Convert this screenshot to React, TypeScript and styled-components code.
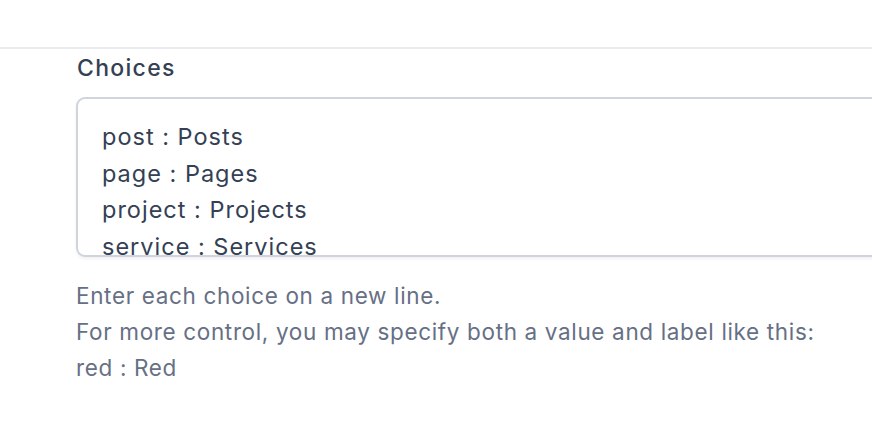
import styled, { createGlobalStyle } from "styled-components";

const GlobalStyle = createGlobalStyle`
  html, body {
    margin: 0;
    padding: 0;
    background: #ffffff;
    font-family: Inter, "Noto Sans", sans-serif;
  }
`;

const Page = styled.div`
  width: 872px;
  height: 424px;
  overflow: hidden;
  padding-top: 47px;
  box-sizing: border-box;
`;

const Divider = styled.div`
  height: 2px;
  background: #eaebef;
`;

const Field = styled.div`
  padding: 3px 0 0 76px;
`;

const Label = styled.label`
  display: block;
  padding-left: 1px;
  font-size: 23px;
  font-weight: 500;
  letter-spacing: 1.3px;
  line-height: 32px;
  color: #344054;
  margin-bottom: 13px;
`;

const TextArea = styled.textarea`
  display: block;
  box-sizing: border-box;
  width: 860px;
  height: 160px;
  margin: 0;
  padding: 20px 24px;
  border: 2px solid #d0d5dd;
  border-radius: 9px;
  box-shadow: 0 2px 3px rgba(16, 24, 40, 0.06);
  font-family: Inter, "Noto Sans", sans-serif;
  font-size: 23.5px;
  letter-spacing: 1px;
  line-height: 36.5px;
  color: #344054;
  background: #ffffff;
  resize: none;
  overflow: hidden;
  outline: none;
`;

const Help = styled.p`
  margin: 21px 0 0;
  font-size: 22.5px;
  letter-spacing: 0.65px;
  line-height: 36px;
  color: #667085;
`;

const choices = [
  "post : Posts",
  "page : Pages",
  "project : Projects",
  "service : Services",
  "product : Products",
].join("\n");

export default function App() {
  return (
    <>
      <GlobalStyle />
      <Page>
        <Divider />
        <Field>
          <Label>Choices</Label>
          <TextArea defaultValue={choices} readOnly />
          <Help>
            Enter each choice on a new line.
            <br />
            For more control, you may specify both a value and label like this:
            <br />
            red : Red
          </Help>
        </Field>
      </Page>
    </>
  );
}
